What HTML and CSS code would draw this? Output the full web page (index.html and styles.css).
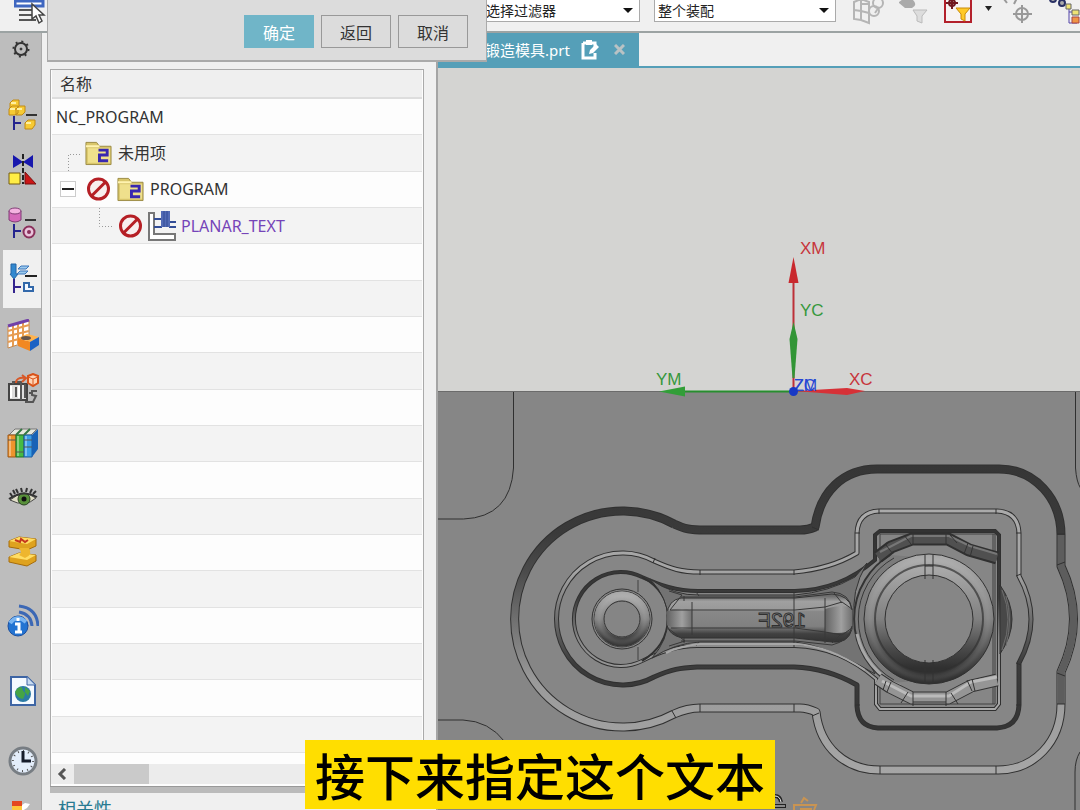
FILE: index.html
```html
<!DOCTYPE html>
<html lang="zh-CN">
<head>
<meta charset="UTF-8">
<meta name="viewport" content="width=device-width, initial-scale=1.0">
<title>NC_PROGRAM</title>
<link rel="stylesheet" href="styles.css">
</head>
<body>

<header class="toolbar">
  <button type="button" class="menu-button" aria-label="菜单">
    <svg width="34" height="26" viewBox="0 0 34 26">
      <path d="M1 1h28v5H1z" fill="#fff" stroke="#3f67c0" stroke-width="3"/>
      <path d="M5 10h17M5 15h17M5 20h17" stroke="#555" stroke-width="2"/>
      <path d="M18 4v15l4-3 3 7 3-2-3-6h5z" fill="#fff" stroke="#444" stroke-width="1.5"/>
    </svg>
  </button>
  <span class="select-box select-filter">
    <select aria-label="选择过滤器"><option>选择过滤器</option></select>
  </span>
  <span class="select-box select-scope">
    <select aria-label="选择范围"><option>整个装配</option></select>
  </span>
  <div class="tools">
    <button type="button" aria-label="部件链接">
      <svg width="32" height="26" viewBox="0 0 32 26" fill="none" stroke="#b5b5b5" stroke-width="2">
        <path d="M2 2l7-3 8 3v21l-8-3-7-1zM2 10l7 1 8 2M9-1v21M9 4h9"/>
        <ellipse cx="26" cy="3" rx="5" ry="5"/><ellipse cx="22" cy="11" rx="5" ry="5"/><path d="M27 7l-4 6"/>
      </svg>
    </button>
    <button type="button" aria-label="重置过滤器">
      <svg width="32" height="26" viewBox="0 0 32 26">
        <path d="M1 2l7-5v3h7q5 5-1 8H7l-6-5z" fill="#aaa"/>
        <path d="M15 10h14l-5 6v7l-5-2v-5z" fill="#ddd" stroke="#bbb"/>
      </svg>
    </button>
    <button type="button" aria-label="过滤器">
      <svg width="28" height="26" viewBox="0 0 28 26">
        <path d="M1-1v23h26V-1z" fill="#f7f3f3" stroke="#b3202b" stroke-width="2"/>
        <path d="M8-3v12M2 3h12" stroke="#701820" stroke-width="2"/><circle cx="8" cy="3" r="3" fill="none" stroke="#701820" stroke-width="2"/>
        <path d="M12 8h14l-5 6v7l-4-2v-5z" fill="#ffc928" stroke="#c98a08"/>
      </svg>
    </button>
    <button type="button" aria-label="更多过滤器">
      <svg width="8" height="26" viewBox="0 0 8 26"><path d="M-1 6h7L2.500 11z" fill="#222"/></svg>
    </button>
    <button type="button" aria-label="捕捉点">
      <svg width="30" height="26" viewBox="0 0 30 26" fill="none" stroke="#999" stroke-width="2">
        <circle cx="14" cy="14" r="6"/><path d="M14 5v18M5 14h19M-4-1l3 4M6 4l3-6"/>
      </svg>
    </button>
    <button type="button" aria-label="查找部件">
      <svg width="28" height="26" viewBox="0 0 28 26">
        <g fill="#aaa" stroke="#293064" stroke-width="2"><circle cx="1" cy="-1" r="3"/><circle cx="10" cy="3" r="3"/></g>
        <path d="M17 4v19h8M17 12h8" fill="none" stroke="#5344a8"/>
        <path d="M14 4h5v5h-5zM20 10h7v5h-7z" fill="#eee375" stroke="#666"/><path d="M20 17h7v6h-7z" fill="#ef9445" stroke="#a44"/>
      </svg>
    </button>
  </div>
</header>

<main class="workspace">
  <nav class="rail" aria-label="资源条">
    <button type="button" class="rail-settings" aria-label="设置">
      <svg width="18" height="18" viewBox="0 0 18 18" fill="none" stroke="#333">
        <circle cx="9" cy="9" r="6" stroke-width="2"/><circle cx="9" cy="9" r="7.500" stroke-width="2" stroke-dasharray="2 3.900"/><circle cx="9" cy="9" r="1" fill="#333"/>
      </svg>
    </button>
    <button type="button" aria-label="装配导航器">
      <svg width="30" height="32" viewBox="0 0 30 32">
        <g fill="#f6ca35" stroke="#c18a16"><path d="M2 4l3-3h6v6l-3 3H2zM1 10l3-3h6v7l-3 2H1zM8 10l3-3h6v6l-3 3H8zM17 24l3-3h7v5l-3 4h-7z"/></g>
        <path d="M3 4h5M2 10h5M9 10h5M18 24h5" stroke="#fff0a0" stroke-width="2"/>
        <path d="M6 17v14M6 24h7" stroke="#24248e" stroke-width="2"/><path d="M18 16h11" stroke="#333" stroke-width="2"/>
      </svg>
    </button>
    <button type="button" aria-label="约束导航器">
      <svg width="30" height="32" viewBox="0 0 30 32">
        <path d="M5 2l10 7-10 6zM25 2l-10 7 10 6z" fill="#1717ad"/><path d="M15 1v30" stroke="#222" stroke-width="2" stroke-dasharray="5 2"/>
        <path d="M1 20h11v11H1z" fill="#ffed45" stroke="#745d12"/><path d="M17 19l11 12H17z" fill="#cb1616" stroke="#711"/>
      </svg>
    </button>
    <button type="button" aria-label="部件导航器">
      <svg width="30" height="32" viewBox="0 0 30 32">
        <path d="M1 4v9q6 4 12 0V4" fill="#d66abb" stroke="#813d76"/><ellipse cx="7" cy="4" rx="6" ry="3" fill="#f4b3e1" stroke="#813d76"/>
        <path d="M6 17v14M6 24h7" stroke="#24248e" stroke-width="2"/><path d="M17 13h11" stroke="#333" stroke-width="2"/>
        <circle cx="21" cy="25" r="5.500" fill="#e9c4db" stroke="#8a305b" stroke-width="2"/><circle cx="21" cy="25" r="2" fill="#8a305b"/>
      </svg>
    </button>
    <button type="button" class="active" aria-label="工序导航器">
      <svg width="30" height="32" viewBox="0 0 30 32">
        <path d="M3 1h5v10h2l-4 5-4-5h1z" fill="#3288cf" stroke="#2465a4"/><path d="M10 6l3-3h8l-3 3zM9 11l3-3h8l-3 3z" fill="#9bc9ed" stroke="#3b76bb"/>
        <path d="M6 16v14M6 24h7" stroke="#34248e" stroke-width="2"/><path d="M17 13h12" stroke="#222" stroke-width="2"/>
        <path d="M16 20h5v4h4v4h-9z" fill="#f4f8ff" stroke="#3268aa" stroke-width="2"/>
      </svg>
    </button>
    <button type="button" aria-label="加工特征">
      <svg width="32" height="32" viewBox="0 0 32 32">
        <path d="M1 7L22 1v21L1 29z" fill="#fff" stroke="#c88749"/><path d="M1 12l21-6M1 17l21-5M1 23l21-6M6 6v21M11 4v21M16 3v21" stroke="#e79c51" stroke-width="2"/><path d="M1 7L22 1" stroke="#7140a8" stroke-width="3"/>
        <path d="M11 19l9-4 12 3-9 5z" fill="#ffb34e"/><path d="M11 19l12 4v9l-12-5z" fill="#f28822"/><path d="M32 18l-9 5v9l9-6z" fill="#1c62c4"/><ellipse cx="19" cy="19" rx="5" ry="2" fill="#66564b"/>
      </svg>
    </button>
    <button type="button" aria-label="机床导航器">
      <svg width="32" height="32" viewBox="0 0 32 32">
        <path d="M2 11h18v16H2z" fill="#ddd" stroke="#444" stroke-width="2"/><path d="M6 11V9h8v18M9 14v10M18 11v14" fill="none" stroke="#555" stroke-width="2"/><path d="M4 13v12M12 13v12" stroke="#fff" stroke-width="2"/>
        <path d="M9 10q0-6 9-5M15 2l4 3-4 4" fill="none" stroke="#d85828" stroke-width="2"/><path d="M21 3l5-2 5 2v7l-5 3-5-3z" fill="#ffd4b5" stroke="#d95218" stroke-width="2"/><path d="M21 4l5 2 5-2M26 6v6" fill="none" stroke="#d95218"/>
        <path d="M30 18h-5v4l4 1-3 6h-8M22 20h3" fill="none" stroke="#555" stroke-width="2"/>
      </svg>
    </button>
    <button type="button" aria-label="重用库">
      <svg width="32" height="32" viewBox="0 0 32 32">
        <path d="M2 8l6-6h22L24 8z" fill="#e8e8dd" stroke="#777"/><path d="M1 8h8v22H1z" fill="#ee942d" stroke="#9c5719"/><path d="M9 8h8v22H9z" fill="#46bb42" stroke="#216e29"/><path d="M17 8h8v22h-8z" fill="#3b9ee8" stroke="#205d9f"/><path d="M25 8l6-6v20l-6 8z" fill="#1862b6"/>
        <path d="M9 8l6-6M17 8l6-6" stroke="#377744" stroke-width="2"/><path d="M3 9v20M11 9v20M19 9v20" stroke="#fff" opacity=".7"/><path d="M1 13h8M17 13h8M17 20h8M9 25h8" stroke="#555"/>
      </svg>
    </button>
    <button type="button" aria-label="视图">
      <svg width="30" height="24" viewBox="0 0 30 24">
        <path d="M2 15Q15 4 28 13q-11 10-26 2z" fill="#e1dec8" stroke="#444"/><circle cx="16" cy="14" r="6" fill="#58903a" stroke="#294122"/><circle cx="16" cy="14" r="2.500" fill="#111"/>
        <path d="M1 14Q15 4 29 12M4 11L2 8M7 9L5 5M10 8L8 4M14 7l-1-4M18 7l1-4M22 8l2-4M25 9l3-3" fill="none" stroke="#333" stroke-width="2"/>
      </svg>
    </button>
    <button type="button" aria-label="加工向导">
      <svg width="30" height="32" viewBox="0 0 30 32">
        <path d="M1 6l10-4 17 2v7l-9 4L1 12zM1 22l10-4 17 2v6l-9 5-18-4z" fill="#dea21f" stroke="#a66c0c"/><path d="M1 6l10-4 17 2-9 5zM1 22l10-4 17 2-9 5z" fill="#ffdd63"/><path d="M11 13q4 5 0 7l6 3q8-3 4-10" fill="#eeb62e"/><path d="M7 5l5 2 1-3 4 3 3-2" fill="none" stroke="#c5371e" stroke-width="2"/>
      </svg>
    </button>
    <div class="rail-group">
      <button type="button" aria-label="信息">
        <svg width="32" height="34" viewBox="0 0 32 34">
          <g fill="none" stroke="#3c68b5" stroke-width="3"><path d="M12 2q18 2 19 20M12 8q12 2 13 14M12 13q7 2 8 9"/></g>
          <circle cx="11" cy="22" r="10" fill="#2374d2" stroke="#1c4fa0"/><path d="M3 19q7-9 16-1" stroke="#79b5f2" stroke-width="4" fill="none"/><path d="M11 14v3M8 20h4v8M8 28h7" stroke="#fff" stroke-width="3" fill="none"/>
        </svg>
      </button>
      <button type="button" aria-label="浏览器">
        <svg width="26" height="30" viewBox="0 0 26 30">
          <path d="M1 1h16l8 8v20H1z" fill="#f5faff" stroke="#3e65a4" stroke-width="2"/><path d="M17 1v8h8" fill="#c8dbf1" stroke="#3e65a4"/>
          <circle cx="13" cy="18" r="8" fill="#2b7ba5"/><path d="M7 13q5-5 6 2 4 1 0 8-6-1-8-7M15 11l5 4-2 5-3-4z" fill="#45a445"/>
        </svg>
      </button>
      <button type="button" aria-label="历史记录">
        <svg width="30" height="30" viewBox="0 0 30 30">
          <circle cx="15" cy="15" r="13" fill="#e3edfa" stroke="#777d83" stroke-width="3"/><circle cx="15" cy="15" r="10" fill="none" stroke="#555" stroke-width="2" stroke-dasharray="1 4.200"/><path d="M15 5v10h8" fill="none" stroke="#151c2b" stroke-width="3"/>
        </svg>
      </button>
      <button type="button" class="rail-last" aria-label="角色">
        <svg width="26" height="26" viewBox="0 0 26 26"><path d="M2 0h10v26H2z" fill="#e44820"/><path d="M2 5h10v21H2z" fill="#ffc73a"/><path d="M12 4l3-2 5 1-3 4-5 3z" fill="#fff"/></svg>
      </button>
    </div>
  </nav>

  <section class="navigator">
    <div class="tree-panel">
      <div class="tree-scroll">
        <table class="tree">
          <thead><tr><th scope="col">名称</th></tr></thead>
          <tbody>
            <tr><td><div class="node">NC_PROGRAM</div></td></tr>
            <tr><td><div class="node">
              <svg class="guide guide-wide" viewBox="0 0 27 36"><path d="M12.500 36V19.500H26"/></svg>
              <svg class="folder" viewBox="0 0 28 26"><use href="#folder"/></svg>
              <span>未用项</span>
            </div></td></tr>
            <tr><td><div class="node">
              <button type="button" class="expander" aria-label="折叠">
                <svg width="14" height="14" viewBox="0 0 14 14"><path d="M1 7h12" stroke="#222" stroke-width="2"/></svg>
              </button>
              <svg class="ban" viewBox="0 0 24 24"><use href="#ban"/></svg>
              <svg class="folder" viewBox="0 0 28 26"><use href="#folder"/></svg>
              <span>PROGRAM</span>
            </div></td></tr>
            <tr><td><div class="node node-operation">
              <svg class="guide guide-deep" viewBox="0 0 60 36"><path d="M42.500 0v18.500H57"/></svg>
              <svg class="ban" viewBox="0 0 24 24"><use href="#ban"/></svg>
              <svg class="operation" viewBox="0 0 30 32">
                <path d="M2 3h5v21h21v6H2z" fill="#fff" stroke="#777" stroke-width="2"/>
                <path d="M7 9h8M7 17h8M22 12h7M22 17h7" stroke="#334d96" stroke-width="2"/><path d="M14 1h9v16h-9z" fill="#536bb5"/><path d="M17 1v16M20 1v16" stroke="#334d96"/>
              </svg>
              <span class="operation-name">PLANAR_TEXT</span>
            </div></td></tr>
            <tr><td></td></tr>
            <tr><td></td></tr>
            <tr><td></td></tr>
            <tr><td></td></tr>
            <tr><td></td></tr>
            <tr><td></td></tr>
            <tr><td></td></tr>
            <tr><td></td></tr>
            <tr><td></td></tr>
            <tr><td></td></tr>
            <tr><td></td></tr>
            <tr><td></td></tr>
            <tr><td></td></tr>
            <tr><td></td></tr>
          </tbody>
        </table>
      </div>
      <div class="scrollbar">
        <button type="button" aria-label="向左滚动"><svg width="10" height="12" viewBox="0 0 10 12"><path d="M8 1L3 6l5 5" fill="none" stroke="#555" stroke-width="3"/></svg></button>
        <div class="thumb"></div>
      </div>
    </div>
    <div class="splitter"></div>
    <h2 class="dependencies">相关性</h2>
  </section>

  <section class="view">
    <div class="tabs">
      <div class="tab">
        <span>锻造模具.prt</span>
        <svg width="18" height="20" viewBox="0 0 18 20"><path d="M2 3h12v4M14 13v5H2V3" fill="none" stroke="#fff" stroke-width="3"/><path d="M5 0h6v5H5zM8 14l1-4 6-6 3 3-6 6z" fill="#fff"/></svg>
        <button type="button" aria-label="关闭"><svg width="11" height="11" viewBox="0 0 11 11"><path d="M1 1l9 9M10 1l-9 9" stroke="#b9c2c4" stroke-width="3"/></svg></button>
      </div>
    </div>
    <svg class="scene" viewBox="438 68 642 742" preserveAspectRatio="xMidYMid slice">
      <defs>
        <linearGradient id="outerWall" gradientUnits="userSpaceOnUse" x1="0" y1="465" x2="0" y2="774">
          <stop offset="0" stop-color="#363636"/><stop offset=".22" stop-color="#3a3a3a"/><stop offset=".35" stop-color="#4c4c4c"/><stop offset=".5" stop-color="#707070"/><stop offset=".7" stop-color="#9a9a9a"/><stop offset="1" stop-color="#a6a6a6"/>
        </linearGradient>
        <linearGradient id="middleWall" gradientUnits="userSpaceOnUse" x1="0" y1="510" x2="0" y2="729">
          <stop offset="0" stop-color="#aaa"/><stop offset=".28" stop-color="#a5a5a5"/><stop offset=".5" stop-color="#6c6c6c"/><stop offset=".7" stop-color="#3c3c3c"/><stop offset="1" stop-color="#343434"/>
        </linearGradient>
        <linearGradient id="innerWall" gradientUnits="userSpaceOnUse" x1="0" y1="530" x2="0" y2="709">
          <stop offset="0" stop-color="#333"/><stop offset=".38" stop-color="#3a3a3a"/><stop offset=".6" stop-color="#888"/><stop offset="1" stop-color="#aaa"/>
        </linearGradient>
        <linearGradient id="handle" gradientUnits="userSpaceOnUse" x1="0" y1="596" x2="0" y2="642">
          <stop offset="0" stop-color="#6c6c6c"/><stop offset=".12" stop-color="#a0a0a0"/><stop offset=".3" stop-color="#999"/><stop offset=".34" stop-color="#888"/><stop offset=".66" stop-color="#808080"/><stop offset=".82" stop-color="#414141"/><stop offset="1" stop-color="#333"/>
        </linearGradient>
        <linearGradient id="roundUp" x1="0" y1="0" x2="0" y2="1">
          <stop offset="0" stop-color="#a8a8a8"/><stop offset=".5" stop-color="#808080"/><stop offset=".8" stop-color="#4a4a4a"/><stop offset="1" stop-color="#303030"/>
        </linearGradient>
        <linearGradient id="roundSide" x1="0" y1="0" x2="1" y2="0">
          <stop offset="0" stop-color="#636363"/><stop offset=".6" stop-color="#a0a0a0"/><stop offset="1" stop-color="#707070"/>
        </linearGradient>
        <filter id="soft"><feGaussianBlur stdDeviation="2"/></filter>
      </defs>

      <!-- background and stock block -->
      <path d="M438 68h642v323H438z" fill="#d4d4d2"/>
      <path d="M438 391h642v419H438z" fill="#868686"/>
      <path d="M438 391.500h642" stroke="#6b6b6b"/>
      <g fill="none" stroke="#303030">
        <path d="M513.500 392v76q-3 49-50 51H438M438 720h25q26 1 42 22M1075.500 392v76q1 14 5 20M1080 752q-5 8-5 20v38"/>
      </g>

      <!-- outer wall -->
      <g fill="none" stroke-linejoin="round">
        <path d="M674 524C685 529 690 530 705 530H800Q808 530 815 527C820 492 843 469 877 469H999C1035 469 1061 499 1061 535V566Q1086 619 1061 672V704C1061 742 1034 770 998 770H880C845 770 820 747 816 712Q807 708 800 708H700C690 708 683 710 674 714A108 108 0 1 1 674 524" stroke="#303030" stroke-width="9"/>
        <path d="M674 524C685 529 690 530 705 530H800Q808 530 815 527C820 492 843 469 877 469H999C1035 469 1061 499 1061 535V566Q1086 619 1061 672V704C1061 742 1034 770 998 770H880C845 770 820 747 816 712Q807 708 800 708H700C690 708 683 710 674 714A108 108 0 1 1 674 524" stroke="url(#outerWall)" stroke-width="7"/>
        <path d="M1061 535V566Q1086 619 1061 672V704" stroke="#5d5d5d" stroke-width="7"/>
        <path d="M1057 534h8M1057 565l8-3M1057 673l8 3M1057 704h8M996 766v8M880 766v8M794 704v8M700 704v8M672 711l4 7M812 527l7 3M812 716l7-3" stroke="#303030"/>
      </g>

      <!-- middle wall -->
      <g fill="none" stroke-linejoin="round">
        <path d="M654 561C672 569 681 572 700 572H794Q830 569 857 553V533Q858 512 879 511H997Q1018 512 1019 533V576Q1043 619 1019 663V705Q1018 727 997 728H878Q858 727 857 706V685Q827 668 794 667H697C680 668 672 669 654 677A66 66 0 1 1 654 561" stroke="#303030" stroke-width="5"/>
        <path d="M654 561C672 569 681 572 700 572H794Q830 569 857 553V533Q858 512 879 511H997Q1018 512 1019 533V576Q1043 619 1019 663V705Q1018 727 997 728H878Q858 727 857 706V685Q827 668 794 667H697C680 668 672 669 654 677A66 66 0 1 1 654 561" stroke="url(#middleWall)" stroke-width="3"/>
        <path d="M700 570v5M794 570v5M655 558l-2 5M879 509v5M996 509v5M1016 533h5M1016 576l5-2M1016 663l5 2M1016 705h5M855 533h5M855 705h5" stroke="#303030"/>
      </g>

      <!-- inner pocket -->
      <g fill="none">
        <path d="M642 577C660 585 676 591 698 591H795Q840 590 875 560V535L880 531H995L999 535V704L995 709H880L876 704V679Q839 647 795 646H700Q673 645 642 661A47 47 0 1 1 642 577" stroke="#303030" stroke-width="4"/>
        <path d="M642 577C660 585 676 591 698 591H795Q840 590 875 560V535L880 531H995L999 535V704L995 709H880L876 704V679Q839 647 795 646H700Q673 645 642 661A47 47 0 1 1 642 577" stroke="url(#innerWall)" stroke-width="2"/>
        <path d="M638 580v12M638 647v13M880 534h115v170H880zM993 534v170" stroke="#404040"/>
        <path d="M642 577Q669 592 668 619Q667 646 642 661" stroke="#303030" stroke-width="2"/>
      </g>

      <!-- small boss -->
      <g fill="none">
        <circle cx="622" cy="619" r="30" stroke="#333"/><circle cx="622" cy="619" r="28" stroke="#404040"/>
        <circle cx="622" cy="619" r="23" stroke="url(#roundUp)" stroke-width="9"/>
        <circle cx="622" cy="619" r="23" stroke="#ccc" stroke-width="3" filter="url(#soft)" opacity=".35"/>
        <circle cx="622" cy="619" r="18" fill="#858585" stroke="#333"/>
      </g>

      <!-- connecting rod -->
      <path d="M650 579Q674 596 700 595H795Q829 592 855 577L867 563Q850 592 855 619T875 674L861 666Q823 645 795 642H700Q675 643 652 658Q668 640 668 619T650 579z" fill="#737373" stroke="#333"/>
      <path d="M667 615Q668 600 681 598H795L832 594Q849 595 852 609V629Q848 644 832 642L795 638H682Q669 635 667 625z" fill="url(#handle)" stroke="#333"/>
      <path d="M667 611Q682 606 692 611V628Q676 631 667 625z" fill="url(#roundSide)"/>
      <path d="M825 609Q845 603 852 609V629Q845 635 825 632z" fill="url(#roundSide)"/>
      <g fill="none" stroke="#383838">
        <path d="M681 597h114l37-5q18 1 20 18M681 641h114l37 4q17-4 20-19M670 610h125l30-3 17-5 10 7M671 628h124l30 4 17 3 10-7M692 602v33M794 593v54M825 598v45M834 593l8 10M840 635l-8 8M669 591l13 4-12 15M669 646l16-5-16-12M684 596v5M684 638v5M696 592l3 4M696 646l3-4"/>
      </g>
      <path d="M666 653Q680 646 700 644H795Q829 646 865 670" fill="none" stroke="#a7a7a7" stroke-width="2"/>
      <text class="engraving" transform="translate(806 627) scale(-1 1)">192F</text>

      <!-- large boss and stepped recess -->
      <path d="M890 555A75 75 0 0 0 890 683L929 680V558z" fill="#7b7b7b"/>
      <g fill="none" stroke-linejoin="round">
        <path d="M890 555A75 75 0 0 0 890 683" stroke="#333" stroke-width="2"/>
        <path d="M857 634A73 73 0 0 0 900 686" stroke="#a8a8a8" stroke-width="3"/>
        <path d="M894 558A70 70 0 0 0 894 680" stroke="#383838"/>
        <path d="M878 557L891 547 912 539H948L969 550 997 558" stroke="#303030" stroke-width="13"/>
        <path d="M878 557L891 547 912 539H948L969 550 997 558" stroke="#505050" stroke-width="9"/>
        <path d="M880 552L911 536H949L970 546 997 554" stroke="#777" stroke-width="2"/>
        <path d="M878 679L890 687 912 698H948L971 686 997 680" stroke="#333" stroke-width="13"/>
        <path d="M878 679L890 687 912 698H948L971 686 997 680" stroke="#959595" stroke-width="11"/>
        <path d="M882 681L911 696H949L971 682 997 677" stroke="#bbb" stroke-width="3"/>
        <path d="M886 545l7 9M904 535l7 9M913 533v12M946 533v12M950 535l7 8M968 543l-4 11M973 546l-3 11M886 681l-3 9M891 682l-4 10M908 692l-7 11M913 692v14M946 692v14M951 693l7 11M967 680l5 11M972 679l3 12M913 702h33" stroke="#333"/>
        <path d="M1000 585Q1024 619 1000 654z" fill="#484848" stroke="#303030"/><path d="M1002 590Q1014 619 1002 650M1006 596Q1013 619 1006 646" stroke="#6e6e6e"/>
      </g>
      <g fill="none">
        <circle cx="929" cy="619" r="59" stroke="url(#roundUp)" stroke-width="12"/>
        <circle cx="929" cy="619" r="49" stroke="url(#roundUp)" stroke-width="10"/>
        <circle cx="929" cy="619" r="54" stroke="#303030" stroke-width="2" opacity=".7"/>
        <circle cx="929" cy="619" r="59" stroke="#ddd" stroke-width="3" filter="url(#soft)" opacity=".2"/>
        <circle cx="929" cy="619" r="65" stroke="#303030"/>
      </g>
      <circle cx="929" cy="619" r="44" fill="#868686" stroke="#303030"/>
      <path d="M925 555v24M933 555v24M925 660v23M933 660v23M925 566h8" stroke="#333" fill="none"/>

      <!-- coordinate axes -->
      <g class="axis-label">
        <path d="M793.500 391V280" stroke="#bd3038" stroke-width="2"/><path d="M793.500 257l5 26h-10z" fill="#c9282d"/>
        <path d="M793.500 322l4 17-3 39h-2l-3-39z" fill="#329536"/>
        <path d="M793 391.500H680" stroke="#278e2e" stroke-width="2"/><path d="M659 391.500l26-5v10z" fill="#329e38"/>
        <path d="M795 391l52-3 18 3-18 4z" fill="#d63137"/>
        <text x="800" y="254" fill="#c7343b">XM</text><text x="800" y="316" fill="#37983c">YC</text>
        <text x="656" y="385" fill="#37983c">YM</text><text x="849" y="385" fill="#c7343b">XC</text>
        <text class="z-label" x="794" y="391">ZM</text><text class="z-label" x="794" y="391">ZC</text>
        <circle cx="793.500" cy="391.500" r="4.500" fill="#1738c5"/>
      </g>
      <path d="M775 796q5 0 6 6M774 806h12" fill="none" stroke="#222" stroke-width="4"/><path d="M775 796q5 0 6 6M774 806h11" fill="none" stroke="#eee" stroke-width="1"/>
      <path d="M794 810v-5h22l-2 5M801 803l3-5 4 3M800 809h12" fill="none" stroke="#c99452" stroke-width="2"/>
    </svg>
  </section>
</main>

<div class="dialog" role="dialog" aria-label="确认">
  <button type="button" class="primary">确定</button>
  <button type="button">返回</button>
  <button type="button">取消</button>
</div>

<p class="caption">接下来指定这个文本</p>

<svg class="symbols" aria-hidden="true">
  <symbol id="folder" viewBox="0 0 28 26">
    <path d="M1 2h11l3 4h12v19H1z" fill="#d9c66b" stroke="#9a8942"/><path d="M3 8h23v15H3z" fill="#efe08c"/><path d="M1 6h14" stroke="#fff3b0" stroke-width="2"/>
    <path d="M14 10h9v5h-8v6h9" fill="none" stroke="#3827af" stroke-width="3"/>
  </symbol>
  <symbol id="ban" viewBox="0 0 24 24">
    <circle cx="12" cy="12" r="10" fill="#f7eeee" stroke="#b51f25" stroke-width="3"/><path d="M5 19L19 5" stroke="#b51f25" stroke-width="3"/>
  </symbol>
</svg>

</body>
</html>
```
FILE: styles.css
```css
* {
  box-sizing: border-box;
}
body {
  margin: 0;
  height: 100vh;
  display: flex;
  flex-direction: column;
  overflow: hidden;
  position: relative;
  background-color: #f0f0f0;
  color: #333;
  font-family: "Noto Sans", "Noto Sans CJK SC", sans-serif;
  font-size: 15px;
}
button {
  padding: 0;
  border: none;
  background: none;
  font: inherit;
  cursor: pointer;
}
svg {
  display: block;
  flex-shrink: 0;
}
.symbols {
  position: absolute;
  width: 0;
  height: 0;
}

/* toolbar */
.toolbar {
  display: flex;
  align-items: flex-start;
  flex-shrink: 0;
  height: 33px;
  border-bottom: 2px solid #9ca3a3;
}
.menu-button {
  width: 47px;
  padding-left: 14px;
}
.select-box {
  position: relative;
  flex-shrink: 0;
}
.select-box::after {
  content: "";
  position: absolute;
  top: 8px;
  right: 7px;
  border: 5px solid transparent;
  border-top-color: #111;
  border-bottom: none;
  pointer-events: none;
}
.select-box select {
  appearance: none;
  display: block;
  width: 100%;
  height: 22px;
  padding: 0 20px 3px 3px;
  border: 1px solid #aaa;
  border-top: none;
  border-radius: 0;
  background-color: #fff;
  color: #222;
  font-family: "Noto Sans CJK SC", sans-serif;
  font-size: 14px;
}
.select-filter {
  width: 158px;
  margin-left: 435px;
}
.select-scope {
  width: 182px;
  margin-left: 14px;
}
.tools {
  display: flex;
  gap: 14px;
  margin-left: 16px;
}
.tools svg {
  overflow: visible;
}

/* resource bar */
.workspace {
  display: flex;
  flex: 1;
  min-height: 0;
}
.rail {
  display: flex;
  flex-direction: column;
  flex-shrink: 0;
  width: 42px;
  overflow: hidden;
  background-color: #bdbdbd;
  border-right: 1px solid #aaa;
}
.rail button {
  display: flex;
  align-items: center;
  justify-content: center;
  flex-shrink: 0;
  width: 100%;
  height: 54px;
  padding-left: 4px;
}
.rail .rail-settings {
  height: 32px;
  margin-bottom: 23px;
  padding-left: 0;
}
.rail .active {
  width: 39px;
  height: 58px;
  margin-left: 3px;
  padding-left: 0;
  background-color: #f0f0f0;
}
.rail-group {
  margin-top: 8px;
}
.rail-group button {
  height: 70px;
}
.rail-group .rail-last {
  align-items: flex-start;
  padding-top: 5px;
}

/* program navigator */
.navigator {
  display: flex;
  flex-direction: column;
  flex-shrink: 0;
  width: 396px;
  padding: 36px 0 0 8px;
  border-right: 2px solid #a5a5a5;
}
.tree-panel {
  display: flex;
  flex-direction: column;
  flex: 1;
  min-height: 0;
  width: 374px;
  padding-bottom: 2px;
  border: 1px solid #aaa;
  border-bottom: none;
  background-color: #fdfdfd;
}
.tree-scroll {
  flex: 1;
  min-height: 0;
  padding: 0 1px 11px;
}
.tree {
  width: 100%;
  height: 100%;
  border-collapse: collapse;
  font-size: 16px;
}
.tree th {
  height: 28px;
  padding: 0 8px;
  border-bottom: 2px solid #ddd;
  background-color: #efefef;
  font-weight: 400;
  text-align: left;
  line-height: 26px;
}
.tree td {
  height: 36px;
  padding: 0 4px;
  border-bottom: 1px solid #e2e2e2;
}
.tree tbody tr:nth-child(even) {
  background-color: #f3f3f3;
}
.node {
  display: flex;
  align-items: center;
  gap: 6px;
  height: 35px;
  line-height: 20px;
}
.node-operation {
  gap: 4px;
}
.guide {
  height: 36px;
  margin-right: -4px;
}
.guide path {
  fill: none;
  stroke: #999;
  stroke-dasharray: 1 2;
}
.guide-wide {
  width: 27px;
}
.guide-deep {
  width: 62px;
}
.folder {
  width: 27px;
  height: 26px;
}
.ban {
  width: 25px;
  height: 24px;
}
.operation {
  width: 30px;
  height: 32px;
}
.operation-name {
  color: #7544b8;
}
.expander {
  width: 16px;
  height: 16px;
  margin: 0 4px;
  border: 1px solid #ccc;
  background-color: #fff;
}
.scrollbar {
  display: flex;
  height: 20px;
  background-color: #ececec;
}
.scrollbar button {
  width: 23px;
  padding-left: 6px;
}
.thumb {
  width: 75px;
  background-color: #cacaca;
}
.splitter {
  height: 7px;
  border-top: 1px solid #999;
  background-color: #bbb;
}
.dependencies {
  height: 17px;
  margin: 0;
  padding: 5px 0 0 8px;
  overflow: hidden;
  color: #287a91;
  font-size: 18px;
  font-weight: 400;
  line-height: 22px;
}

/* graphics view */
.view {
  display: flex;
  flex-direction: column;
  flex: 1;
  min-width: 0;
}
.tabs {
  display: flex;
  height: 35px;
  flex-shrink: 0;
  border-bottom: 2px solid #559fb8;
}
.tab {
  display: flex;
  align-items: center;
  gap: 11px;
  padding: 0 10px 0 47px;
  background-color: #559fb8;
  color: #fff;
}
.tab button {
  padding: 4px;
}
.scene {
  flex: 1;
  width: 100%;
  min-height: 0;
}
.axis-label {
  font-family: "Liberation Sans", sans-serif;
  font-size: 17px;
}
.z-label {
  fill: #2746d4;
  font-size: 16px;
}
.engraving {
  fill: none;
  stroke: #303030;
  font-family: "Liberation Sans", sans-serif;
  font-size: 21px;
}

/* floating dialog */
.dialog {
  position: absolute;
  top: 0;
  left: 47px;
  display: flex;
  justify-content: flex-end;
  gap: 7px;
  width: 440px;
  padding: 15px 18px 12px;
  border: 1px solid #aaa;
  border-top: none;
  border-bottom-width: 2px;
  background-color: #dcdcdc;
}
.dialog button {
  width: 70px;
  height: 33px;
  border: 1px solid #999;
  color: #333;
  font-size: 16px;
}
.dialog .primary {
  border-color: #70b5c8;
  background-color: #70b5c8;
  color: #fff;
}

.caption {
  position: absolute;
  bottom: 1px;
  left: 50%;
  transform: translateX(-50%);
  margin: 0;
  padding: 0 10px;
  background-color: #ffde00;
  color: #000;
  font-family: "Noto Sans CJK SC", sans-serif;
  font-size: 50px;
  font-weight: 500;
  line-height: 69px;
  white-space: nowrap;
}
```
